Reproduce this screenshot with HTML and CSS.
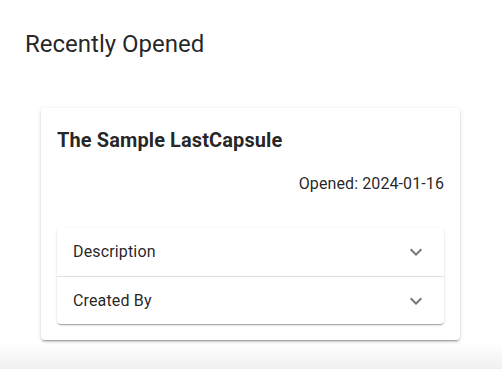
FILE: index.html
```html
<!DOCTYPE html>
<html>
<head>
<meta charset="utf-8">
<link rel="stylesheet" href="styles.css">
</head>
<body>
<main class="page">
  <h1 class="heading">Recently Opened</h1>
  <div class="card">
    <h2 class="card-title">The Sample LastCapsule</h2>
    <p class="opened">Opened: 2024-01-16</p>
    <div class="accordion">
      <div class="acc-row">
        <span class="acc-label">Description</span>
        <svg class="chev" viewBox="0 0 24 24" width="24" height="24"><path d="M16.59 8.59 12 13.17 7.41 8.59 6 10l6 6 6-6z"/></svg>
      </div>
      <div class="acc-row divided">
        <span class="acc-label">Created By</span>
        <svg class="chev" viewBox="0 0 24 24" width="24" height="24"><path d="M16.59 8.59 12 13.17 7.41 8.59 6 10l6 6 6-6z"/></svg>
      </div>
    </div>
  </div>
</main>
<div class="bottom-shade"></div>
</body>
</html>
```
FILE: styles.css
```css
html, body {
  margin: 0;
  padding: 0;
  background: #fff;
  font-family: Roboto, "Liberation Sans", sans-serif;
  color: rgba(0, 0, 0, 0.87);
  overflow: hidden;
  height: 369px;
}
.page {
  padding: 28px 25px 0 25px;
}
.heading {
  margin: 0;
  font-size: 24px;
  font-weight: 400;
  line-height: 32px;
  letter-spacing: 0;
}
.card {
  margin: 48px 0 0 16px;
  width: 419px;
  box-sizing: border-box;
  padding: 16px;
  border-radius: 4px;
  background: #fff;
  box-shadow: 0px 3px 1px -2px rgba(0,0,0,0.2), 0px 2px 2px 0px rgba(0,0,0,0.14), 0px 1px 5px 0px rgba(0,0,0,0.12);
}
.card-title {
  margin: 0;
  font-size: 20px;
  font-weight: 700;
  line-height: 32px;
  letter-spacing: 0.1px;
}
.opened {
  margin: 16px 0 32px;
  font-size: 16px;
  line-height: 24px;
  text-align: right;
  letter-spacing: 0.1px;
}
.accordion {
  border-radius: 4px;
  background: #fff;
  box-shadow: 0px 2px 1px -1px rgba(0,0,0,0.2), 0px 1px 1px 0px rgba(0,0,0,0.14), 0px 1px 3px 0px rgba(0,0,0,0.12);
}
.acc-row {
  display: flex;
  align-items: center;
  justify-content: space-between;
  box-sizing: border-box;
  height: 48px;
  padding: 0 16px;
}
.acc-row.divided {
  border-top: 1px solid rgba(0, 0, 0, 0.12);
}
.acc-label {
  font-size: 16px;
  line-height: 24px;
  letter-spacing: 0.15px;
}
.chev {
  fill: rgba(0, 0, 0, 0.54);
  display: block;
}
.bottom-shade {
  position: fixed;
  left: 0;
  right: 0;
  bottom: 0;
  height: 26px;
  background: linear-gradient(to bottom, rgba(0,0,0,0), rgba(0,0,0,0.06));
}
```
